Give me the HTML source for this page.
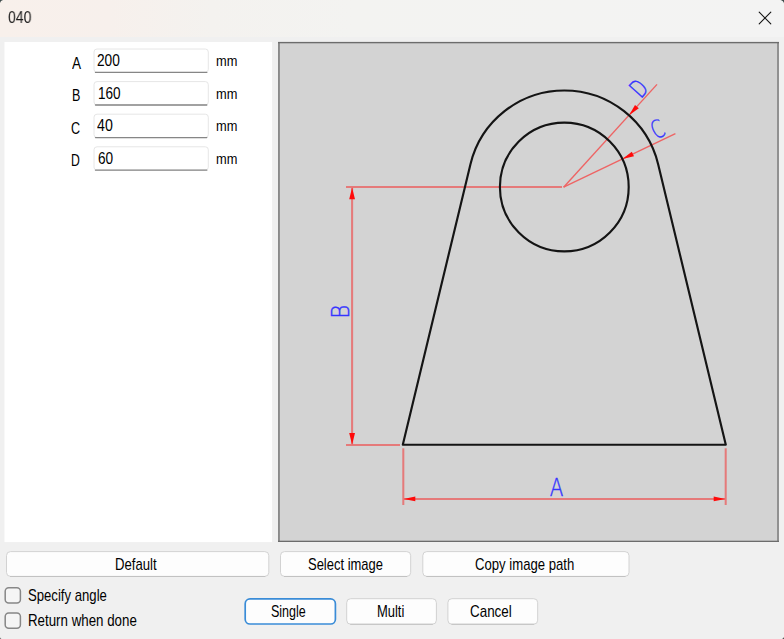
<!DOCTYPE html>
<html><head><meta charset="utf-8">
<style>
html,body{margin:0;padding:0;}
body{width:784px;height:639px;background:#f0f0f0;position:relative;overflow:hidden;font-family:"Liberation Sans",sans-serif;font-size:16px;color:#000;}
.abs{position:absolute;}
#title{left:0;top:0;width:784px;height:37px;background:linear-gradient(90deg,#f8f0eb 0%,#f7f0ec 14%,#f4f2ef 27%,#f3f3f1 45%,#f3f3f3 100%);}
#left{left:4.5px;top:42px;width:267.6px;height:500.2px;background:#fff;}
.t{position:absolute;white-space:nowrap;line-height:24px;transform-origin:0 0;font-family:"Liberation Sans",sans-serif;}
.gs{will-change:transform;}
.btn{box-sizing:border-box;background:#fdfdfd;border:1px solid #d4d4d4;border-bottom-color:#c4c4c4;border-radius:4.5px;}
</style></head><body>
<div id="title" class="abs"></div>
<svg class="abs" style="left:0;top:0" width="784" height="639" viewBox="0 0 784 639">
 <!-- window corners -->
 <path d="M0 0 H3 Q0.5 0.5 0 3 Z" fill="#3c4a4a"/>
 <path d="M784 0 H780.5 Q783.5 0.5 784 3.5 Z" fill="#3c4a4a"/>
 <path d="M784 639 V637 Q783.5 638.5 782 639 Z" fill="#444"/>
 <path d="M0 639 V637.3 Q0.3 638.6 1.5 639 Z" fill="#666"/>
 <!-- close icon -->
 <path d="M759.2 12.2 L770.8 23.8 M770.8 12.2 L759.2 23.8" stroke="#111" stroke-width="1.1" stroke-linecap="round" fill="none"/>
 <!-- left white panel -->
 <rect x="4.5" y="42" width="267.6" height="500.1" fill="#fff"/>
 <!-- inputs -->
 <g fill="#fff" stroke="#e6e6e6" stroke-width="1">
  <rect x="94" y="49" width="114.3" height="23.4" rx="3"/>
  <rect x="94" y="81.6" width="114.3" height="23.4" rx="3"/>
  <rect x="94" y="114.2" width="114.3" height="23.4" rx="3"/>
  <rect x="94" y="146.8" width="114.3" height="23.4" rx="3"/>
 </g>
 <g fill="none" stroke="#868686" stroke-width="1.3" stroke-linecap="round">
  <path d="M95.5 72.4 H206.8"/>
  <path d="M95.5 105 H206.8"/>
  <path d="M95.5 137.6 H206.8"/>
  <path d="M95.5 170.2 H206.8"/>
 </g>
 <!-- image panel -->
 <rect x="278" y="42" width="501" height="500" fill="#d3d3d3"/>
 <g fill="#8a8a8a"><rect x="278" y="42" width="1.9" height="500"/><rect x="777.1" y="42" width="1.8" height="500"/></g>
 <g fill="#6c6c6c"><rect x="278" y="41.9" width="501" height="1.4"/><rect x="278" y="540.7" width="501" height="1.3"/></g>
 <!-- checkboxes -->
 <g fill="#f5f5f5" stroke="#878787" stroke-width="1.5">
  <rect x="5.2" y="587.7" width="15.2" height="15.2" rx="3.5"/>
  <rect x="5.2" y="613" width="15.2" height="15.2" rx="3.5"/>
 </g>
 <!-- buttons -->
 <g fill="#fdfdfd" stroke="#d2d2d2" stroke-width="1">
  <rect x="6.5" y="551.6" width="262.3" height="24.8" rx="4"/>
  <rect x="280.5" y="551.6" width="130.2" height="24.8" rx="4"/>
  <rect x="422.8" y="551.6" width="206.2" height="24.8" rx="4"/>
  <rect x="346.7" y="598.7" width="89.7" height="25.5" rx="4"/>
  <rect x="447.9" y="598.7" width="89.8" height="25.5" rx="4"/>
 </g>
 <g fill="none" stroke="#c2c2c2" stroke-width="1">
  <path d="M10 576.5 H265.3 M284 576.5 H407.2 M426.3 576.5 H625.5 M350.2 624.3 H432.9 M451.4 624.3 H534.2"/>
 </g>
 <rect x="245.2" y="598.9" width="90.2" height="25.1" rx="4.8" fill="#fdfdfd" stroke="#3a8cd7" stroke-width="1.7"/>

 <!-- drawing -->
 <g fill="none" stroke="#e57a7a" stroke-width="2.05">
  <path d="M346 187 H562"/>
  <path d="M346 444.9 H400"/>
  <path d="M352.1 187 V444.7"/>
  <path d="M403.3 448.3 V505"/>
  <path d="M725.7 448.3 V505"/>
  <path d="M403.5 498.9 H725.5"/>
 </g>
 <g fill="none" stroke="#ee6464" stroke-width="1.4">
  <path d="M563.6 187.2 L657 84.4"/>
  <path d="M563.6 187.2 L675.4 133.7"/>
 </g>
 <g fill="#ff0a0a" stroke="none">
  <path d="M352.1 187.6 L349.2 199.3 L355.0 199.3 Z"/>
  <path d="M352.1 444.6 L355.0 432.9 L349.2 432.9 Z"/>
  <path d="M403.6 498.9 L415.3 501.3 L415.3 496.5 Z"/>
  <path d="M725.4 498.9 L713.7 496.5 L713.7 501.3 Z"/>
  <path d="M629.1 115.3 L638.8 108.3 L635.0 105.0 Z"/>
  <path d="M622.4 159.1 L634.0 156.3 L631.8 151.8 Z"/>
 </g>
 <g fill="none" stroke="#141414" stroke-width="2.15" stroke-linejoin="round">
  <path d="M402.8 444.7 L470.4 164.4 A96.6 96.6 0 0 1 658.2 164.4 L725.8 444.7 Z"/>
  <circle cx="564.3" cy="187" r="64.4"/>
 </g>
 <g fill="#3434ff" stroke="#3434ff" stroke-width="0.45" font-family="'DejaVu Sans Light','DejaVu Sans',sans-serif" font-weight="200" font-size="25" text-anchor="middle">
  <text transform="translate(556.6 496.2) scale(0.8 1)">A</text>
  <text transform="translate(349.3 311.8) rotate(-90) scale(0.86 1)">B</text>
  <text transform="translate(661.3 137.1) rotate(-25.6) scale(0.7 1)">C</text>
  <text transform="translate(645.3 94.2) rotate(-47.9) scale(0.7 1)">D</text>
 </g>
</svg>
<span class="t gs" style="left:8.30px;top:5.50px;font-size:15.8px;color:#1a1a1a;transform:scaleX(0.8920)">040</span>
<span class="t " style="left:71.70px;top:51.60px;font-size:15.9px;color:#000;transform:scaleX(0.8545)">A</span>
<span class="t " style="left:72.01px;top:84.10px;font-size:15.9px;color:#000;transform:scaleX(0.7889)">B</span>
<span class="t " style="left:71.20px;top:116.60px;font-size:15.9px;color:#000;transform:scaleX(0.7909)">C</span>
<span class="t " style="left:71.23px;top:149.10px;font-size:15.9px;color:#000;transform:scaleX(0.7700)">D</span>
<span class="t " style="left:97.00px;top:48.00px;font-size:17.2px;color:#000;transform:scaleX(0.7967)">200</span>
<span class="t " style="left:97.51px;top:80.60px;font-size:17.2px;color:#000;transform:scaleX(0.7892)">160</span>
<span class="t " style="left:97.00px;top:113.20px;font-size:17.2px;color:#000;transform:scaleX(0.8244)">40</span>
<span class="t " style="left:97.60px;top:145.80px;font-size:17.2px;color:#000;transform:scaleX(0.7921)">60</span>
<span class="t " style="left:216.34px;top:49.10px;font-size:15.0px;color:#000;transform:scaleX(0.8555)">mm</span>
<span class="t " style="left:216.34px;top:81.70px;font-size:15.0px;color:#000;transform:scaleX(0.8555)">mm</span>
<span class="t " style="left:216.34px;top:114.30px;font-size:15.0px;color:#000;transform:scaleX(0.8555)">mm</span>
<span class="t " style="left:216.34px;top:146.90px;font-size:15.0px;color:#000;transform:scaleX(0.8555)">mm</span>
<span class="t " style="left:115.37px;top:552.80px;font-size:15.9px;color:#000;transform:scaleX(0.8271)">Default</span>
<span class="t " style="left:307.60px;top:552.80px;font-size:15.9px;color:#000;transform:scaleX(0.8161)">Select image</span>
<span class="t " style="left:475.10px;top:552.80px;font-size:15.9px;color:#000;transform:scaleX(0.8265)">Copy image path</span>
<span class="t " style="left:271.20px;top:599.70px;font-size:15.9px;color:#000;transform:scaleX(0.7872)">Single</span>
<span class="t " style="left:377.08px;top:599.70px;font-size:15.9px;color:#000;transform:scaleX(0.8151)">Multi</span>
<span class="t " style="left:469.90px;top:599.70px;font-size:15.9px;color:#000;transform:scaleX(0.8440)">Cancel</span>
<span class="t " style="left:28.10px;top:583.90px;font-size:15.9px;color:#000;transform:scaleX(0.8266)">Specify angle</span>
<span class="t " style="left:27.86px;top:608.50px;font-size:15.9px;color:#000;transform:scaleX(0.8378)">Return when done</span>
</body></html>
